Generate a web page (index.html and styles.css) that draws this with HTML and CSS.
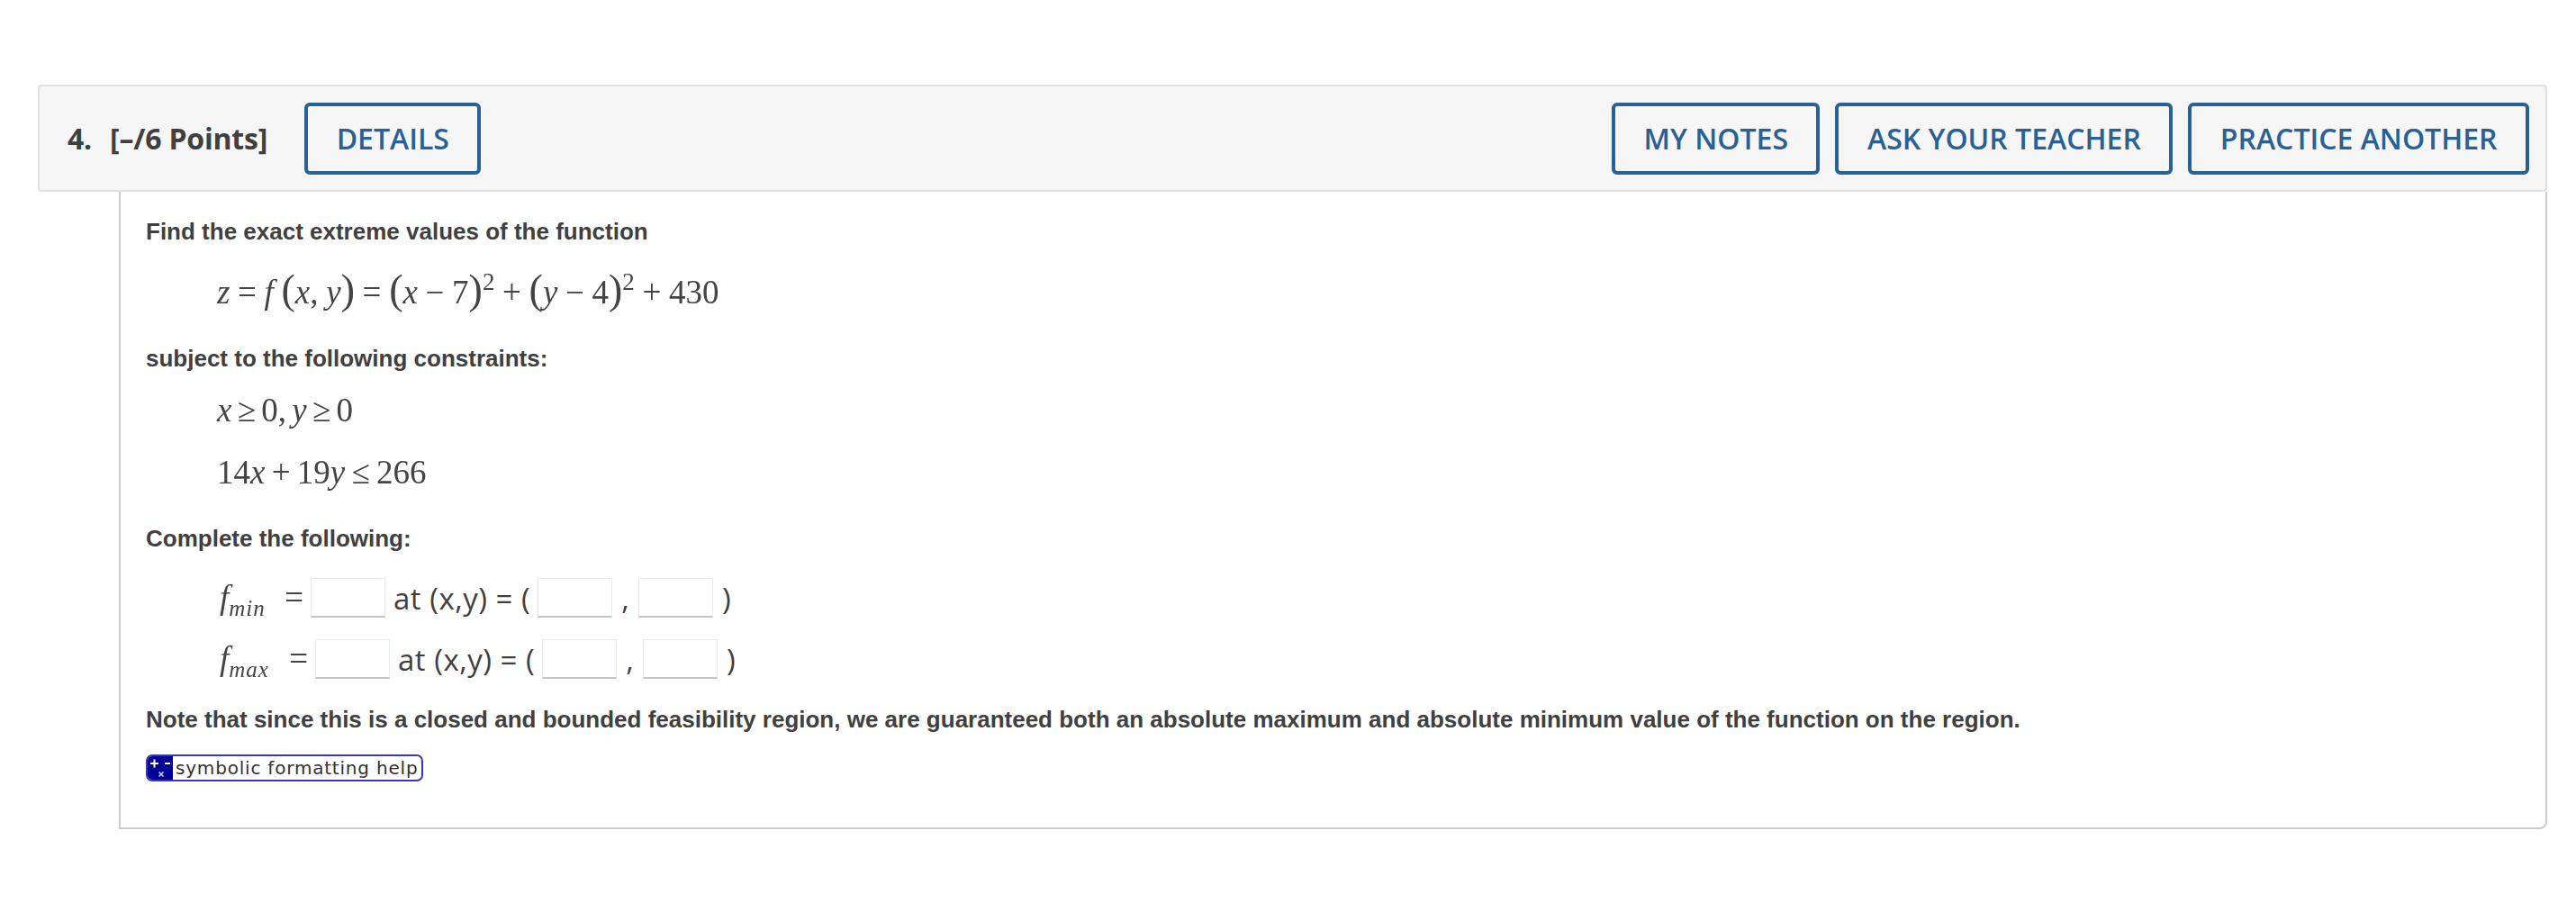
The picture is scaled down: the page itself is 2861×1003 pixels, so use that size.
FILE: index.html
```html
<!DOCTYPE html>
<html lang="en">
<head>
  <meta charset="UTF-8">
  <title>Question 4</title>
  <link rel="stylesheet" href="styles.css">
</head>
<body>
  <div class="question">
    <div class="question-head">
      <div class="head-left">
        <span class="question-title"><span class="question-num">4.</span>[–/6 Points]</span>
        <button class="head-button">DETAILS</button>
      </div>
      <div class="head-right">
        <button class="head-button">MY NOTES</button>
        <button class="head-button">ASK YOUR TEACHER</button>
        <button class="head-button">PRACTICE ANOTHER</button>
      </div>
    </div>

    <div class="question-body">
      <p class="prompt">Find the exact extreme values of the function</p>
      <div class="math math-formula">
        <i>z</i> = <i>f</i> <span class="paren">(</span><i>x</i>, <i>y</i><span class="paren">)</span> = <span class="paren">(</span><i>x</i> − 7<span class="paren">)</span><sup>2</sup> + <span class="paren">(</span><i>y</i> − 4<span class="paren">)</span><sup>2</sup> + 430
      </div>
      <p class="prompt prompt-subject">subject to the following constraints:</p>
      <div class="math math-line1"><i>x</i> ≥ 0, <i>y</i> ≥ 0</div>
      <div class="math math-line2">14<i>x</i> + 19<i>y</i> ≤ 266</div>
      <p class="prompt prompt-complete">Complete the following:</p>

      <div class="answer-row answer-min">
        <span class="math answer-label"><i>f<sub>min</sub></i><span>=</span></span>
        <input class="answer-box" type="text">
        <span class="answer-at">at (x,y) = (</span>
        <input class="answer-box" type="text">
        <span class="answer-comma">,</span>
        <input class="answer-box" type="text">
        <span class="answer-close">)</span>
      </div>
      <div class="answer-row answer-max">
        <span class="math answer-label"><i>f<sub>max</sub></i><span>=</span></span>
        <input class="answer-box" type="text">
        <span class="answer-at">at (x,y) = (</span>
        <input class="answer-box" type="text">
        <span class="answer-comma">,</span>
        <input class="answer-box" type="text">
        <span class="answer-close">)</span>
      </div>

      <p class="prompt prompt-note">Note that since this is a closed and bounded feasibility region, we are guaranteed both an absolute maximum and absolute minimum value of the function on the region.</p>

      <a class="format-help">
        <span class="format-icon">
          <svg width="30" height="30" viewBox="0 0 30 30">
            <path d="M5 10h9M9.5 5.500v9M21 10h6" stroke="#fff" stroke-width="2" fill="none"/>
            <path d="M14.500 19.500l5 5M19.500 19.500l-5 5" stroke="#ccd" stroke-width="1.600" fill="none"/>
          </svg>
        </span>
        <span class="format-text">symbolic formatting help</span>
      </a>
    </div>
  </div>
</body>
</html>
```

FILE: styles.css
```css
body {
  margin: 0;
  background: #fff;
  color: #404040;
  font-family: "Liberation Sans", Arial, sans-serif;
}

.question {
  padding: 94px 32px 0 42px;
}

.question-head {
  display: flex;
  justify-content: space-between;
  align-items: center;
  height: 119px;
  box-sizing: border-box;
  padding: 0 18px 0 31px;
  background: #f6f6f6;
  border: 2px solid #e0e0e0;
  border-radius: 4px;
}

.head-left,
.head-right {
  display: flex;
  align-items: center;
}

.head-right {
  gap: 17px;
}

.question-title {
  font-family: "Open Sans", sans-serif;
  font-weight: 700;
  font-size: 32px;
  letter-spacing: -0.2px;
  margin-right: 41px;
  white-space: nowrap;
}

.question-num {
  margin-right: 20px;
}

.head-button {
  height: 80px;
  padding: 0 31.5px;
  background: transparent;
  border: 4px solid #2a6194;
  border-radius: 6px;
  color: #2a6194;
  font-family: "Open Sans", sans-serif;
  font-weight: 600;
  font-size: 32px;
  white-space: nowrap;
}

.question-body {
  margin-left: 90px;
  padding: 26px 0 51px 28px;
  border-left: 2px solid #ccc;
  border-right: 2px solid #ccc;
  border-bottom: 2px solid #ccc;
  border-bottom-right-radius: 8px;
}

.prompt {
  margin: 0;
  font-weight: 700;
  font-size: 26px;
  line-height: 36px;
}

.prompt-subject { margin-top: 27px; }
.prompt-complete { margin-top: 35px; }
.prompt-note { margin-top: 27px; }

.math {
  font-family: "Liberation Serif", serif;
  color: #444;
  font-size: 37px;
  filter: blur(0.4px);
  white-space: nowrap;
}

.math-formula {
  margin: 22px 0 0 79px;
  height: 56px;
  line-height: 56px;
  word-spacing: -0.6px;
}

.math-formula sup {
  font-size: 27px;
  line-height: 0;
  vertical-align: 15px;
}

.paren {
  font-size: 46px;
  line-height: 0;
}

.math-line1 {
  margin: 20px 0 0 79px;
  height: 40px;
  line-height: 40px;
  word-spacing: -3px;
}

.math-line2 {
  margin: 29px 0 0 79px;
  height: 40px;
  line-height: 40px;
  word-spacing: -2px;
}

.answer-row {
  display: flex;
  align-items: center;
  height: 44px;
  font-family: "Open Sans", sans-serif;
  font-size: 33px;
}

.answer-min { margin: 26px 0 0 82px; }
.answer-max { margin: 24px 0 0 82px; }

.answer-label {
  display: flex;
  justify-content: space-between;
  box-sizing: border-box;
  width: 101px;
  padding-right: 8px;
  flex: none;
  line-height: 44px;
}

.answer-max .answer-label {
  width: 106px;
}

.answer-label sub {
  font-size: 25px;
  line-height: 0;
  letter-spacing: 1px;
}

.answer-box {
  flex: none;
  width: 83px;
  height: 44px;
  box-sizing: border-box;
  padding: 0;
  background: #fff;
  border: 1px solid #ececec;
  border-bottom: 2px solid #c4c4c4;
}

.answer-at {
  width: 169px;
  padding-left: 9px;
  box-sizing: border-box;
  letter-spacing: 0.5px;
  white-space: nowrap;
}

.answer-comma {
  width: 29px;
  text-align: center;
}

.answer-close {
  margin-left: 10px;
}

.format-help {
  display: flex;
  align-items: stretch;
  width: 308px;
  height: 30px;
  box-sizing: border-box;
  margin-top: 21px;
  border: 2px solid #3737b0;
  border-radius: 7px;
  overflow: hidden;
}

.format-icon {
  display: block;
  flex: none;
  width: 30px;
  margin: -2px 0 -2px -2px;
  background: #000099;
}

.format-text {
  padding-left: 3px;
  font-family: "DejaVu Sans", sans-serif;
  font-size: 20px;
  line-height: 26px;
  letter-spacing: 0.8px;
  color: #333;
  white-space: nowrap;
}
```
